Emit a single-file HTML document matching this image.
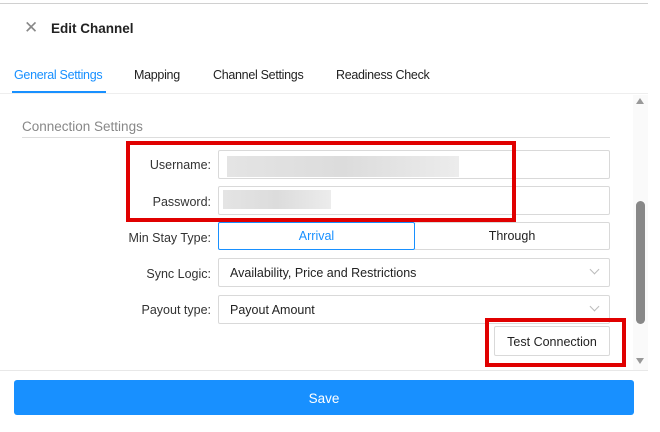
<!DOCTYPE html>
<html><head><meta charset="utf-8"><style>
*{box-sizing:border-box;margin:0;padding:0}
body{width:660px;height:432px;background:#fff;font-family:"Liberation Sans",sans-serif;font-size:12.5px;color:#222;position:relative;overflow:hidden}
.a{position:absolute}
.inp{position:absolute;left:218px;width:392px;border:1px solid #d9d9d9;border-radius:2px;background:#fff}
.lab{position:absolute;right:449px;text-align:right;font-size:12.5px;color:#333}
.red{position:absolute;border:4px solid #e00000}
.blur{position:absolute;background:linear-gradient(90deg,#e4e4e4,#dcdcdc 50%,#ececec)}
.chev{position:absolute;right:11px;top:7px;width:7px;height:7px;border-right:1px solid #bbb;border-bottom:1px solid #bbb;transform:rotate(45deg)}
</style></head><body>
<div class="a" style="left:0;top:3px;width:648px;height:1px;background:#d0d0d0"></div>
<div class="a" style="left:24px;top:19px;width:16px;height:18px;color:#888;font-size:17px;line-height:18px">✕</div>
<div class="a" style="left:51px;top:21px;font-size:13.5px;font-weight:bold;color:#222">Edit Channel</div>
<div class="a" style="left:14px;top:68px;color:#1890ff;letter-spacing:-0.3px">General Settings</div>
<div class="a" style="left:134px;top:68px;letter-spacing:-0.3px">Mapping</div>
<div class="a" style="left:213px;top:68px;letter-spacing:-0.3px">Channel Settings</div>
<div class="a" style="left:336px;top:68px;letter-spacing:-0.3px">Readiness Check</div>
<div class="a" style="left:0;top:93px;width:648px;height:1px;background:#eee"></div>
<div class="a" style="left:12px;top:91px;width:94px;height:2px;background:#1890ff"></div>
<div class="a" style="left:633px;top:95px;width:15px;height:275px;background:#fafafa"></div>
<div class="a" style="left:636px;top:201px;width:9px;height:123px;background:#888;border-radius:5px"></div>
<div class="a" style="left:636px;top:98px;width:0;height:0;border-left:4px solid transparent;border-right:4px solid transparent;border-bottom:6px solid #999"></div>
<div class="a" style="left:636px;top:358px;width:0;height:0;border-left:4px solid transparent;border-right:4px solid transparent;border-top:6px solid #999"></div>
<div class="a" style="left:22px;top:119px;font-size:13.5px;color:#888">Connection Settings</div>
<div class="a" style="left:22px;top:137px;width:588px;height:1px;background:#ddd"></div>

<div class="lab" style="top:158px">Username:</div>
<div class="inp" style="top:150px;height:29px"><div class="blur" style="left:8px;top:5px;width:232px;height:21px"></div></div>
<div class="lab" style="top:195px">Password:</div>
<div class="inp" style="top:186px;height:29px"><div class="blur" style="left:4px;top:3px;width:108px;height:19px"></div></div>
<div class="lab" style="top:231px">Min Stay Type:</div>
<div class="inp" style="left:414px;top:222px;height:28px;width:196px;text-align:center;line-height:27px">Through</div>
<div class="inp" style="top:222px;height:28px;border-color:#1890ff;width:197px;color:#1890ff;text-align:center;line-height:27px">Arrival</div>
<div class="lab" style="top:267px">Sync Logic:</div>
<div class="inp" style="top:258px;height:29px;line-height:28px;padding-left:11px">Availability, Price and Restrictions<div class="chev"></div></div>
<div class="lab" style="top:303px">Payout type:</div>
<div class="inp" style="top:295px;height:29px;line-height:29px;padding-left:11px">Payout Amount<div class="chev"></div></div>
<div class="inp" style="left:494px;top:326px;width:116px;height:30px;text-align:center;line-height:30px;font-size:12.5px">Test Connection</div>

<div class="red" style="left:126px;top:141px;width:390px;height:81px"></div>
<div class="red" style="left:485px;top:318px;width:141px;height:49px"></div>

<div class="a" style="left:0;top:370px;width:648px;height:1px;background:#e8e8e8"></div>
<div class="a" style="left:14px;top:380px;width:620px;height:35px;background:#1890ff;border-radius:3px;color:#fff;text-align:center;line-height:37px;font-size:13.5px">Save</div>
</body></html>
